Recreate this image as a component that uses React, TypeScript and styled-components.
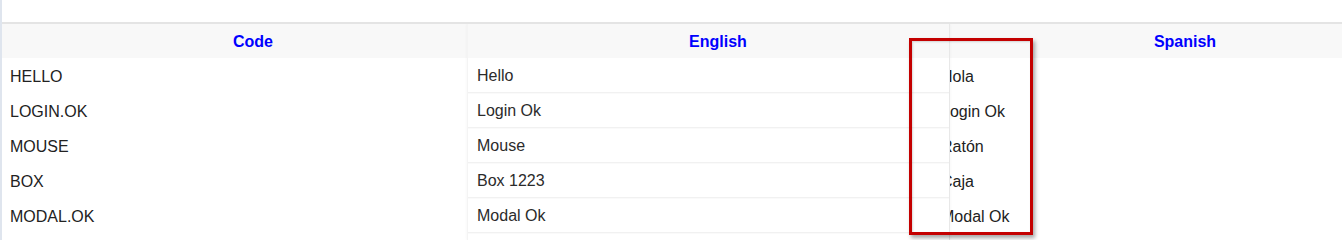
import React from "react";
import styled, { createGlobalStyle, css } from "styled-components";

const GlobalStyle = createGlobalStyle`
  html, body {
    margin: 0;
    padding: 0;
    background: #ffffff;
    overflow: hidden;
  }
  body {
    font-family: "Liberation Sans", Arial, Helvetica, sans-serif;
  }
  * { box-sizing: border-box; }
`;

type ColumnKind = "code" | "english" | "spanish";

const Page = styled.div`
  position: relative;
  height: 240px;
  display: flex;
  flex-direction: column;
  padding-top: 22px;
  border-left: 2px solid #dfe5ee;
`;

const Grid = styled.div`
  flex: 1;
  display: flex;
  border-top: 2px solid #e4e4e4;
  overflow: hidden;
`;

const Column = styled.div<{ $kind: ColumnKind }>`
  display: flex;
  flex-direction: column;
  flex-shrink: 0;
  background: #ffffff;

  ${({ $kind }) =>
    $kind === "code" &&
    css`
      width: 502px;
    `}

  ${({ $kind }) =>
    $kind === "english" &&
    css`
      width: 483px;
      margin-left: -37px;
      position: relative;
      z-index: 1;
      border-left: 1px solid #f4f4f4;
      border-right: 1px solid #e8e8e8;
      box-shadow: 0 0 3px rgba(0, 0, 0, 0.05);
    `}

  ${({ $kind }) =>
    $kind === "spanish" &&
    css`
      width: 508px;
      margin-left: -19px;
    `}
`;

const HeaderCell = styled.div<{ $shift?: number }>`
  height: 34px;
  display: flex;
  align-items: center;
  justify-content: center;
  padding-left: ${({ $shift }) => $shift ?? 0}px;
  padding-top: 1px;
  background: #f8f8f8;
  color: #0000ff;
  font-weight: bold;
  font-size: 16px;
`;

const Cell = styled.div<{ $kind: ColumnKind }>`
  height: 35px;
  display: flex;
  align-items: center;
  padding-left: ${({ $kind }) => ($kind === "code" ? 8 : $kind === "english" ? 9 : 10)}px;
  padding-top: 2px;
  font-size: 16px;
  color: #222222;
  white-space: nowrap;

  ${({ $kind }) =>
    $kind === "english" &&
    css`
      color: #2b2b2b;
      border-bottom: 1px solid #f1f1f1;
      box-shadow: 0 1px 1px rgba(0, 0, 0, 0.02);
    `}
`;

const Highlight = styled.div`
  position: absolute;
  left: 907px;
  top: 38px;
  width: 124px;
  height: 197px;
  border: 3px solid #c40000;
  box-shadow: 2px 3px 4px rgba(0, 0, 0, 0.35), inset 1px 1px 2px rgba(0, 0, 0, 0.15);
  pointer-events: none;
  z-index: 5;
`;

const rows = [
  { code: "HELLO", english: "Hello", spanish: "Hola" },
  { code: "LOGIN.OK", english: "Login Ok", spanish: "Login Ok" },
  { code: "MOUSE", english: "Mouse", spanish: "Ratón" },
  { code: "BOX", english: "Box 1223", spanish: "Caja" },
  { code: "MODAL.OK", english: "Modal Ok", spanish: "Modal Ok" },
];

const columns: { kind: ColumnKind; title: string; shift?: number }[] = [
  { kind: "code", title: "Code" },
  { kind: "english", title: "English", shift: 19 },
  { kind: "spanish", title: "Spanish" },
];

export default function App() {
  return (
    <>
      <GlobalStyle />
      <Page>
        <Grid>
          {columns.map((col) => (
            <Column key={col.kind} $kind={col.kind}>
              <HeaderCell $shift={col.shift}>{col.title}</HeaderCell>
              {rows.map((row) => (
                <Cell key={row.code} $kind={col.kind}>
                  {row[col.kind]}
                </Cell>
              ))}
            </Column>
          ))}
        </Grid>
        <Highlight />
      </Page>
    </>
  );
}
